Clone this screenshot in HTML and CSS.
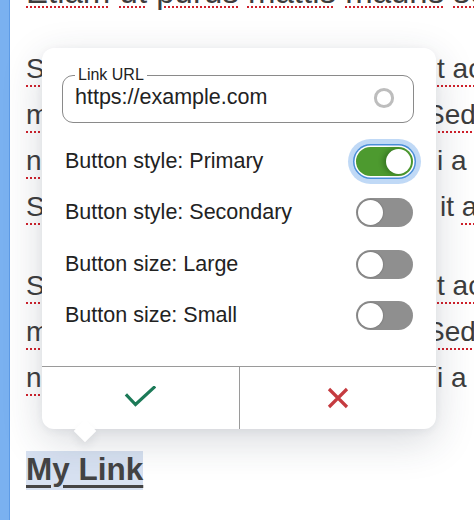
FILE: index.html
```html
<!DOCTYPE html>
<html lang="en">
<head>
  <meta charset="UTF-8" />
  <meta name="viewport" content="width=device-width, initial-scale=1.0" />
  <title>Link editor</title>
  <link rel="stylesheet" href="styles.css">
</head>
<body>
  <div class="editor">
    <!-- left selection bar -->
    <div class="gutter"></div>

    <!-- Document text behind the popup -->
    <div class="doc">
      <h2 class="heading"><span class="sp">Etiam</span> <span class="sp">ut</span> <span class="sp">purus</span> <span class="sp">mattis</span> <span class="sp">mauris</span> <span class="sp">sodales</span></h2>

      <p class="para">
        <span class="line"><span class="lt"><span class="sp">Suspendisse</span> potenti cras</span><span class="rt"><span class="sp">t accumsan</span></span></span>
        <span class="line"><span class="lt"><span class="sp">mauris</span> lacinia dolor</span><span class="rt cut"><span class="sp">Sed</span> vel</span></span>
        <span class="line"><span class="lt"><span class="sp">nunc</span> ornare magna</span><span class="rt">i a fringilla</span></span>
        <span class="line"><span class="lt"><span class="sp">Sed</span> vitae ligula</span><span class="rt nudge">it <span class="sp">amet</span></span></span>
      </p>

      <p class="para">
        <span class="line"><span class="lt"><span class="sp">Suspendisse</span> potenti cras</span><span class="rt"><span class="sp">t accumsan</span></span></span>
        <span class="line"><span class="lt"><span class="sp">mauris</span> lacinia dolor</span><span class="rt cut"><span class="sp">Sed</span> vel</span></span>
        <span class="line"><span class="lt"><span class="sp">nunc</span> ornare magna</span><span class="rt">i a fringilla</span></span>
      </p>

      <p class="link-para"><a class="doc-link">My Link</a></p>
    </div>

    <!-- Link popup -->
    <div class="popup">
      <fieldset class="url-field">
        <legend>Link URL</legend>
        <div class="url-row">
          <span class="url-text">https://example.com</span>
          <svg class="spinner" width="24" height="24" viewBox="0 0 24 24">
            <circle cx="12" cy="12" r="8.6" fill="none" stroke="#bdbdbd" stroke-width="3"/>
          </svg>
        </div>
      </fieldset>

      <div class="options">
        <div class="opt-row">
          <span>Button style: Primary</span>
          <span class="toggle on focused"><span class="knob"></span></span>
        </div>
        <div class="opt-row">
          <span>Button style: Secondary</span>
          <span class="toggle"><span class="knob"></span></span>
        </div>
        <div class="opt-row">
          <span>Button size: Large</span>
          <span class="toggle"><span class="knob"></span></span>
        </div>
        <div class="opt-row">
          <span>Button size: Small</span>
          <span class="toggle"><span class="knob"></span></span>
        </div>
      </div>

      <div class="actions">
        <button class="act">
          <svg width="32" height="24" viewBox="0 0 32 24">
            <polyline points="3,9.5 11.5,18.5 30,1.5" fill="none" stroke="#1c7a58" stroke-width="3.2" stroke-linecap="square"/>
          </svg>
        </button>
        <button class="act split">
          <svg width="24" height="24" viewBox="0 0 24 24">
            <path d="M3 3 L21 21 M21 3 L3 21" fill="none" stroke="#c53b40" stroke-width="3.2"/>
          </svg>
        </button>
      </div>

      <div class="arrow"></div>
    </div>
  </div>
</body>
</html>
```

FILE: styles.css
```css
/* Base */
* {
  margin: 0;
  padding: 0;
  box-sizing: border-box;
}
html, body {
  height: 100%;
  background: #fff;
  overflow: hidden;
  font-family: 'Liberation Sans', Arial, sans-serif;
}

/* Editor */
.editor {
  position: relative;
  display: flex;
  height: 520px;
}
.gutter {
  flex: 0 0 10px;
  background: #7ab1f0;
  border-right: 1px solid #5d9be6;
}
.doc {
  flex: 1;
  padding-left: 16px;
  margin-top: -31px;
  color: #3d3d3d;
  overflow: hidden;
  white-space: nowrap;
}
.sp {
  text-decoration: underline dotted #d0202a;
  text-decoration-thickness: 2px;
  text-underline-offset: 7px;
}
.heading {
  font-size: 33px;
  font-weight: 400;
  line-height: 46px;
  margin-bottom: 31px;
}
.heading .sp {
  text-underline-offset: 3px;
}
.para {
  font-size: 28px;
  line-height: 46px;
  margin-bottom: 33px;
}
.line {
  display: grid;
  grid-template-columns: 411px max-content;
}
.lt {
  overflow: hidden;
}
.rt.cut {
  margin-left: -11px;
}
.rt.nudge {
  margin-left: 3px;
}
.link-para {
  margin-top: 45px;
  font-size: 31.5px;
  line-height: 46px;
}
.doc-link {
  font-weight: 700;
  color: #444;
  background: #d7e1f1;
  padding-bottom: 3px;
  text-decoration: underline;
  text-decoration-thickness: 3px;
  text-underline-offset: 5px;
}

/* Popup */
.popup {
  position: absolute;
  left: 42px;
  top: 48px;
  width: 394px;
  padding-top: 18px;
  background: #fff;
  border-radius: 12px;
  box-shadow: 0 12px 40px rgba(40, 50, 70, 0.18), 0 2px 8px rgba(40, 50, 70, 0.06);
  color: #222;
}
.url-field {
  margin: 0 22px 0 20px;
  border: 1px solid #8a8a8a;
  border-radius: 11px;
  padding: 0 12px 12px;
}
.url-field legend {
  font-size: 16px;
  line-height: 18px;
  padding: 0 3px;
  color: #222;
}
.url-row {
  display: flex;
  align-items: center;
  justify-content: space-between;
  height: 26px;
}
.url-text {
  font-size: 21.5px;
}
.spinner {
  margin-right: 5px;
  margin-top: 2px;
}
.options {
  margin-top: 13px;
  padding: 0 23px 25px 23px;
}
.opt-row {
  display: flex;
  align-items: center;
  justify-content: space-between;
  height: 51.3px;
  font-size: 21.5px;
}

/* Toggles */
.toggle {
  position: relative;
  width: 57px;
  height: 29px;
  border-radius: 15px;
  background: #8f8f8f;
}
.toggle .knob {
  position: absolute;
  left: 2px;
  top: 2px;
  width: 25px;
  height: 25px;
  border-radius: 50%;
  background: #fff;
  box-shadow: 0 0 2px rgba(0, 0, 0, 0.3);
}
.toggle.on {
  background: #4d9a2f;
}
.toggle.on .knob {
  left: 30px;
  box-shadow: -3px 0 5px rgba(0, 40, 0, 0.3);
}
.toggle.focused {
  box-shadow: 0 0 0 1.5px #fff, 0 0 0 3px #4a8ed8, 0 0 0 8px rgba(140, 185, 238, 0.55);
}

/* Action buttons */
.actions {
  display: flex;
  border-top: 1.5px solid #9a9a9a;
}
.act {
  flex: 1;
  height: 62px;
  display: flex;
  align-items: center;
  justify-content: center;
  border: none;
  background: transparent;
}
.act.split {
  border-left: 1.5px solid #9a9a9a;
}
.arrow {
  position: absolute;
  left: 35px;
  bottom: -10px;
  width: 16px;
  height: 16px;
  background: #fff;
  transform: rotate(45deg);
  box-shadow: 4px 4px 8px rgba(40, 50, 70, 0.08);
}
```
